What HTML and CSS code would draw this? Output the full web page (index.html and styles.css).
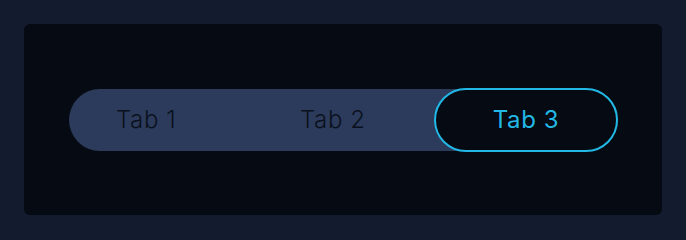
FILE: index.html
```html
<!DOCTYPE html>
<html>
<head>
<meta charset="utf-8">
<link rel="stylesheet" href="styles.css">
</head>
<body>
<div class="card">
  <div class="tabs">
    <div class="tab first">Tab 1</div>
    <div class="tab second">Tab 2</div>
    <div class="tab active">Tab 3</div>
  </div>
</div>
</body>
</html>
```
FILE: styles.css
```css
html, body { margin: 0; padding: 0; }
body {
  background: #131b2e;
  width: 686px;
  height: 240px;
  padding: 24px;
  box-sizing: border-box;
  font-family: "Inter", "Noto Sans", sans-serif;
}
.card {
  background: #060a12;
  border-radius: 6px;
  width: 638px;
  height: 191px;
  display: flex;
  align-items: center;
  padding-left: 45px;
  box-sizing: border-box;
}
.tabs {
  display: flex;
  align-items: center;
  width: 549px;
  height: 62px;
  background: #2c3b5b;
  border-radius: 31px;
}
.tab {
  height: 62px;
  box-sizing: border-box;
  display: flex;
  align-items: center;
  font-size: 24px;
  font-weight: 300;
  color: #0a111e;
  letter-spacing: 0.6px;
}
.tab.first {
  width: 182px;
  padding-left: 47px;
}
.tab.second {
  width: 183px;
  padding-left: 49px;
}
.tab.active {
  width: 184px;
  height: 64px;
  justify-content: center;
  border: 2px solid #22b8e6;
  border-radius: 32px;
  background: #060a12;
  color: #22b8e6;
  font-weight: 400;
}
```
